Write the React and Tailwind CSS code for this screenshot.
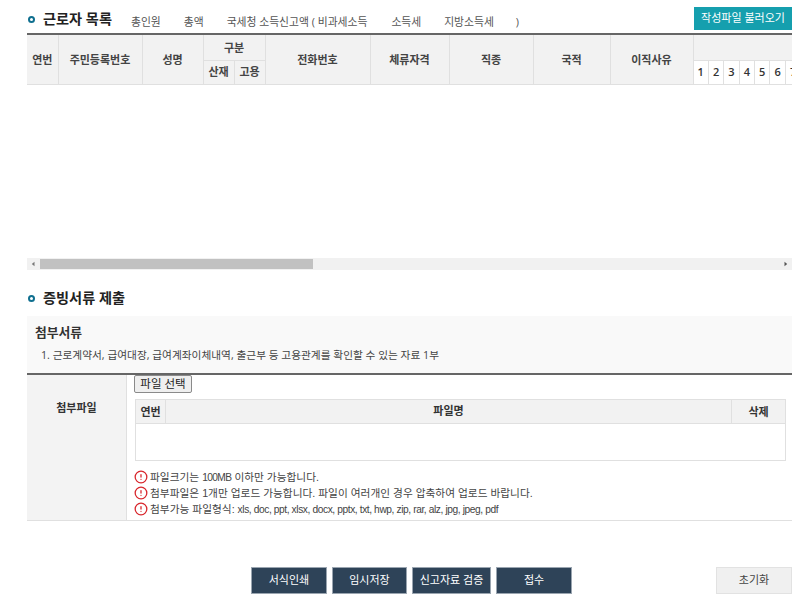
import { CircleAlert } from 'lucide-react'

function SectionTitle({ children }) {
  return (
    <h2 className="flex items-center gap-[8px] text-[14.2px] font-bold leading-5 text-[#222]">
      <span className="ml-px w-[7px] h-[7px] rounded-full border-2 border-[#0f6f8f]" />
      {children}
    </h2>
  )
}

function Notice({ children }) {
  return (
    <li className="flex items-center gap-[2px] h-4">
      <CircleAlert size={14} className="text-[#d8262c] shrink-0" strokeWidth={2.2} />
      <span>{children}</span>
    </li>
  )
}

const th = 'border-r border-b border-[#e0e0e0] font-bold text-[11px] text-[#444] text-center p-0 pt-px'
const darkBtn = 'h-[27px] bg-[#2e4358] border border-[#9aa5b0] text-white text-[11px]'

export default function App() {
  return (
    <div className="w-[800px] h-[600px] overflow-hidden bg-white pl-[27px] pr-2 text-[#333] font-['Open_Sans','Noto_Sans_CJK_KR',sans-serif]">
      <div className="h-[33px] flex items-end">
        <div className="pb-[4px]"><SectionTitle>근로자 목록</SectionTitle></div>
        <div className="flex text-[10.8px] text-[#555] ml-[19px] pb-[3px] leading-4">
          <span>총인원</span>
          <span className="ml-[23px]">총액</span>
          <span className="ml-[23px]">국세청 소득신고액 ( 비과세소득</span>
          <span className="ml-[24px]">소득세</span>
          <span className="ml-[23px]">지방소득세</span>
          <span className="ml-[22px]">)</span>
        </div>
        <button className="ml-auto mb-[3px] w-[98px] h-[23px] bg-[#159fae] text-white text-[11px]">작성파일 불러오기</button>
      </div>

      <div className="overflow-hidden border-t-2 border-[#666] h-[225px]">
        <table className="table-fixed border-collapse w-[774px] max-w-none bg-[#f2f2f2]">
          <colgroup>
            <col className="w-[31px]" />
            <col className="w-[84px]" />
            <col className="w-[61px]" />
            <col className="w-[31px]" />
            <col className="w-[31px]" />
            <col className="w-[105px]" />
            <col className="w-[79px]" />
            <col className="w-[84px]" />
            <col className="w-[77px]" />
            <col className="w-[83px]" />
            {[1, 2, 3, 4, 5, 6, 7].map((n) => <col key={n} className="w-[15.4px]" />)}
          </colgroup>
          <thead>
            <tr className="h-[25px]">
              <th rowSpan={2} className={th}>연번</th>
              <th rowSpan={2} className={th}>주민등록번호</th>
              <th rowSpan={2} className={th}>성명</th>
              <th colSpan={2} className={th}>구분</th>
              <th rowSpan={2} className={th}>전화번호</th>
              <th rowSpan={2} className={th}>체류자격</th>
              <th rowSpan={2} className={th}>직종</th>
              <th rowSpan={2} className={th}>국적</th>
              <th rowSpan={2} className={th}>이직사유</th>
              <th colSpan={7} className="border-b border-[#e0e0e0] p-0" />
            </tr>
            <tr className="h-[24px]">
              <th className={th}>산재</th>
              <th className={th}>고용</th>
              {[1, 2, 3, 4, 5, 6, 7].map((n) => (
                <th key={n} className="border-b border-r border-[#e0e0e0] bg-white font-semibold text-[11px] p-0 pt-px">{n}</th>
              ))}
            </tr>
          </thead>
        </table>
      </div>

      <div className="h-3 bg-[#f1f1f1] flex items-center justify-between">
        <svg width="13" height="12" viewBox="0 0 13 12" className="text-[#777] fill-current"><path d="M7.5 3.8 L4.8 6 L7.5 8.2 Z" /></svg>
        <div className="h-[10px] w-[273px] bg-[#c1c1c1] mr-auto" />
        <svg width="13" height="12" viewBox="0 0 13 12" className="text-[#555] fill-current"><path d="M5.5 3.8 L8.2 6 L5.5 8.2 Z" /></svg>
      </div>

      <div className="mt-[18px] mb-[8px]"><SectionTitle>증빙서류 제출</SectionTitle></div>

      <div className="bg-[#f9f9f9] h-[57px] pl-2 pt-[8px]">
        <p className="text-[12.8px] font-bold leading-4 text-[#333]">첨부서류</p>
        <p className="text-[10.7px] leading-4 mt-[7px] pl-[6px] text-[#444]">1. 근로계약서, 급여대장, 급여계좌이체내역, 출근부 등 고용관계를 확인할 수 있는 자료 1부</p>
      </div>

      <div className="flex border-t-2 border-[#666] border-b border-b-[#e0e0e0] h-[148px]">
        <div className="w-[100px] bg-[#f3f3f3] border-r border-[#e0e0e0] text-center text-[11px] font-bold pt-[25px] shrink-0">첨부파일</div>
        <div className="pl-[7px] flex-1 min-w-0">
          <button className="block w-[58px] h-[18px] bg-[#efefef] border border-[#8a8a8a] rounded-[2px] text-[11.5px] leading-none text-[#222]">파일 선택</button>
          <div className="mt-[6px] ml-px w-[651px] h-[62px] border border-[#e0e0e0]">
            <div className="flex h-[24px] bg-[#f2f2f2] border-b border-[#e0e0e0] text-[11px] font-bold items-center text-center">
              <div className="w-[30px] h-full leading-[24px] border-r border-[#e0e0e0]">연번</div>
              <div className="flex-1">파일명</div>
              <div className="w-[54px] h-full leading-[24px] border-l border-[#e0e0e0]">삭제</div>
            </div>
          </div>
          <ul className="mt-[8px] text-[10.7px] text-[#444] font-['Liberation_Sans','Noto_Sans_CJK_KR',sans-serif]">
            <Notice>파일크기는 <span className="text-[10.2px] tracking-[-0.6px]">100MB</span> 이하만 가능합니다.</Notice>
            <Notice>첨부파일은 1개만 업로드 가능합니다. 파일이 여러개인 경우 압축하여 업로드 바랍니다.</Notice>
            <Notice>첨부가능 파일형식: <span className="text-[10.2px] tracking-[-0.4px]">xls, doc, ppt, xlsx, docx, pptx, txt, hwp, zip, rar, alz, jpg, jpeg, pdf</span></Notice>
          </ul>
        </div>
      </div>

      <div className="flex mt-[46px]">
        <div className="ml-[224px] flex gap-[5px]">
          <button className={`${darkBtn} w-[76px]`}>서식인쇄</button>
          <button className={`${darkBtn} w-[75px]`}>임시저장</button>
          <button className={`${darkBtn} w-[79px]`}>신고자료 검증</button>
          <button className={`${darkBtn} w-[76px]`}>접수</button>
        </div>
        <button className="ml-auto w-[76px] h-[27px] bg-[#f0f0f0] border border-[#e2e2e2] text-[11px] text-[#444]">초기화</button>
      </div>
    </div>
  )
}
